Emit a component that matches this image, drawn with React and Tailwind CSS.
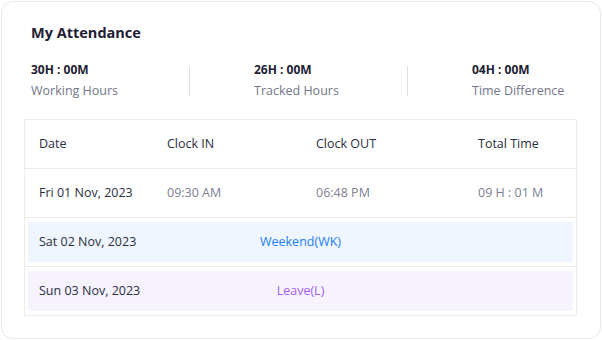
import React from "react";

const stats = [
  { value: "30H : 00M", label: "Working Hours", width: "w-[158px]" },
  { value: "26H : 00M", label: "Tracked Hours", width: "w-[217px] pl-[64px]" },
  { value: "04H : 00M", label: "Time Difference", width: "pl-[64px]" },
];

const cols = "grid grid-cols-[128px_149px_162px_1fr] items-center pl-[14px]";

const Divider = () => <div className="h-[30px] w-px bg-[#e6ded6]" />;

export default function App() {
  return (
    <div className="bg-white p-px font-['Open_Sans',sans-serif]">
      <div className="h-[338px] w-[600px] rounded-xl border border-[#ebe8e3] bg-white pl-[22px] pr-[22px] pt-[21px]">
        <h2 className="pl-[7px] text-[14.5px] font-bold leading-5 text-[#1d2133]">
          My Attendance
        </h2>

        {/* summary of hours */}
        <div className="mt-[19px] flex items-center pl-[7px]">
          {stats.map((s, i) => (
            <React.Fragment key={s.label}>
              {i > 0 && <Divider />}
              <div className={s.width}>
                <div className="text-[12px] font-bold leading-4 text-[#1d2133]">{s.value}</div>
                <div className="mt-[5px] text-[12.5px] leading-4 text-[#727688]">{s.label}</div>
              </div>
            </React.Fragment>
          ))}
        </div>

        {/* attendance table */}
        <div className="mt-[20px] w-[553px] border border-[#efebe6] text-[12.5px]">
          <div className={`${cols} h-[49px] border-b border-[#efebe6] text-[#2a2e3e]`}>
            <span>Date</span>
            <span>Clock IN</span>
            <span>Clock OUT</span>
            <span>Total Time</span>
          </div>

          <div className={`${cols} h-[49px] border-b border-[#efebe6] text-[#7c8090]`}>
            <span className="text-[#2a2e3e]">Fri 01 Nov, 2023</span>
            <span>09:30 AM</span>
            <span>06:48 PM</span>
            <span>09 H : 01 M</span>
          </div>

          <div className="border-b border-[#efebe6] px-[3px] py-[4px]">
            <div className="grid h-[40px] grid-cols-[1fr_auto_1fr] items-center bg-[#f0f6ff]">
              <span className="pl-[11px] text-[#2a2e3e]">Sat 02 Nov, 2023</span>
              <span className="text-[#1a7df4]">Weekend(WK)</span>
              <span />
            </div>
          </div>

          <div className="px-[3px] py-[4px]">
            <div className="grid h-[40px] grid-cols-[1fr_auto_1fr] items-center bg-[#f6f2fe]">
              <span className="pl-[11px] text-[#2a2e3e]">Sun 03 Nov, 2023</span>
              <span className="text-[#a45ef5]">Leave(L)</span>
              <span />
            </div>
          </div>
        </div>
      </div>
    </div>
  );
}
